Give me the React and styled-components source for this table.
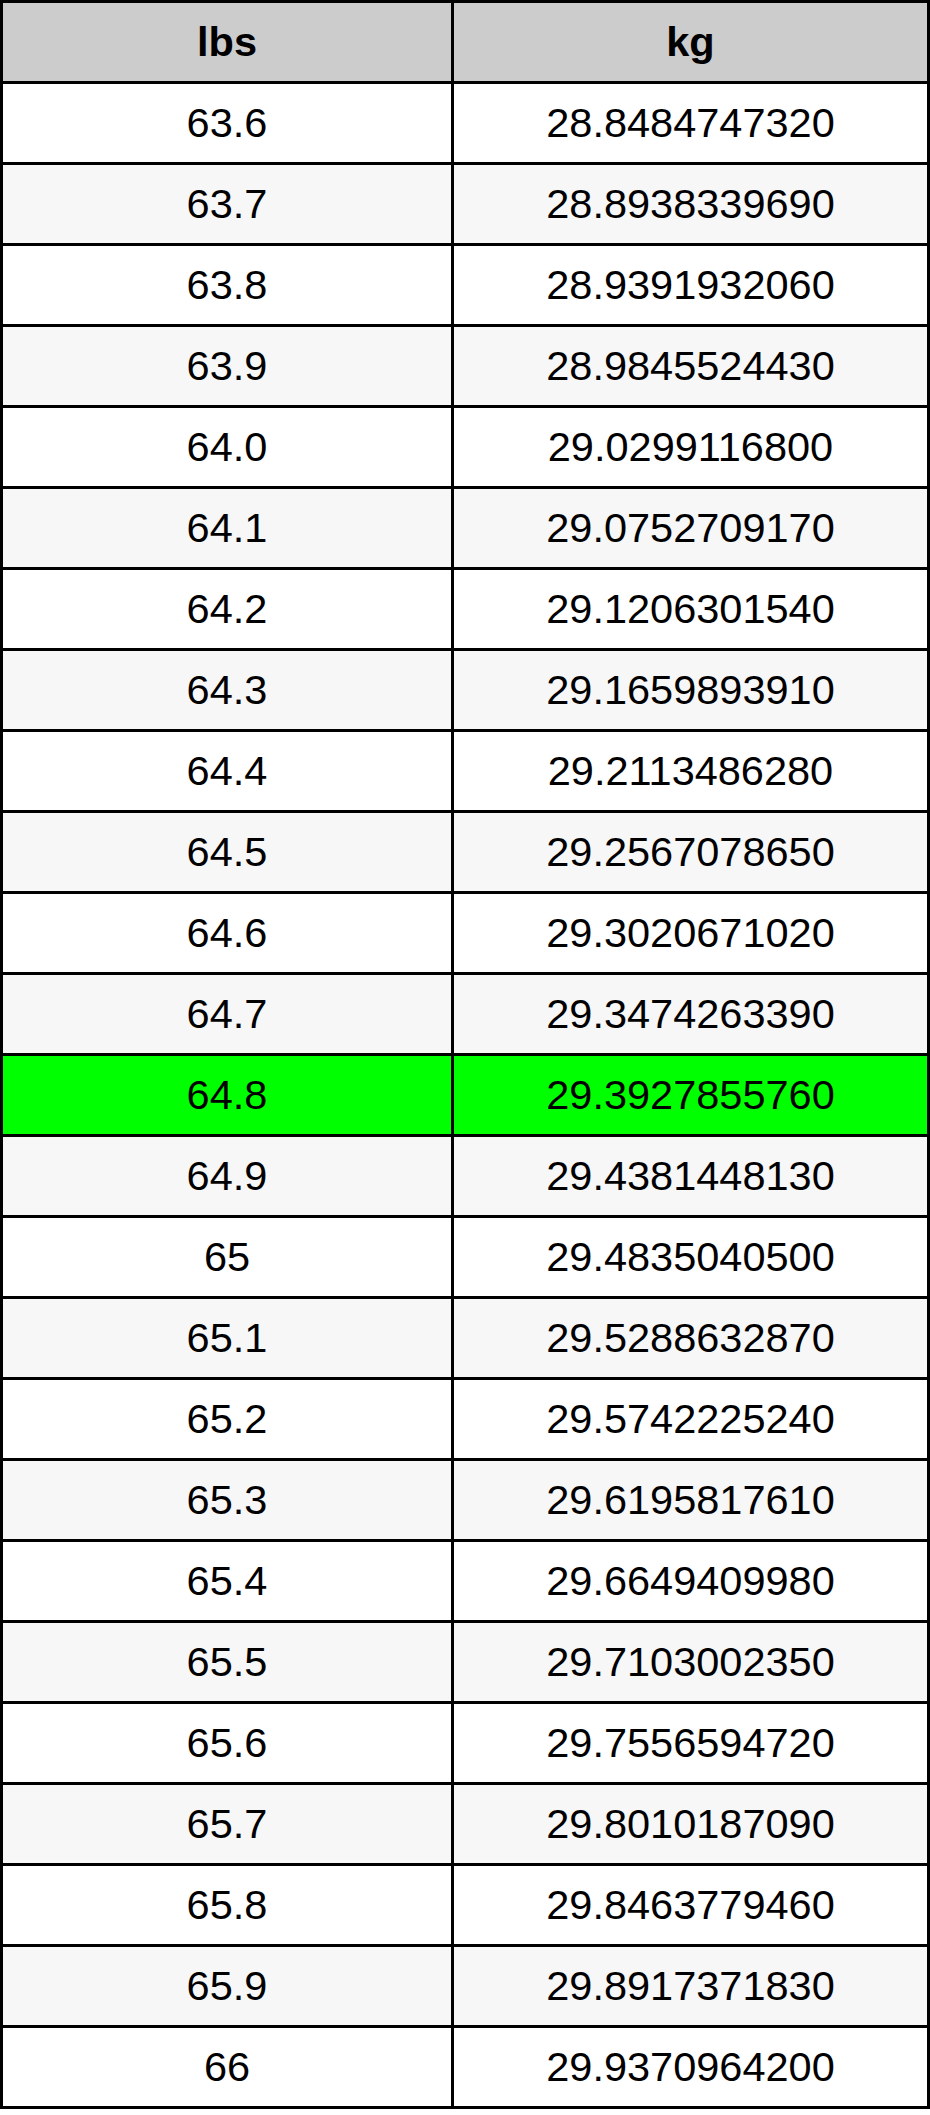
import React from 'react';
import styled, { createGlobalStyle } from 'styled-components';

const GlobalStyle = createGlobalStyle`
    body {
        margin: 0;
        background: #fff;
        font-family: "Liberation Sans", Arial, sans-serif;
    }
`;

const rows = [
    ['63.6', '28.8484747320'],
    ['63.7', '28.8938339690'],
    ['63.8', '28.9391932060'],
    ['63.9', '28.9845524430'],
    ['64.0', '29.0299116800'],
    ['64.1', '29.0752709170'],
    ['64.2', '29.1206301540'],
    ['64.3', '29.1659893910'],
    ['64.4', '29.2113486280'],
    ['64.5', '29.2567078650'],
    ['64.6', '29.3020671020'],
    ['64.7', '29.3474263390'],
    ['64.8', '29.3927855760'],
    ['64.9', '29.4381448130'],
    ['65', '29.4835040500'],
    ['65.1', '29.5288632870'],
    ['65.2', '29.5742225240'],
    ['65.3', '29.6195817610'],
    ['65.4', '29.6649409980'],
    ['65.5', '29.7103002350'],
    ['65.6', '29.7556594720'],
    ['65.7', '29.8010187090'],
    ['65.8', '29.8463779460'],
    ['65.9', '29.8917371830'],
    ['66', '29.9370964200'],
];

const highlight = '64.8';

export default function App() {
    return (
        <>
            <GlobalStyle />
            <Table>
                <colgroup>
                    <col style={{ width: 451 }} />
                    <col />
                </colgroup>
                <thead>
                    <tr>
                        <Head>lbs</Head>
                        <Head>kg</Head>
                    </tr>
                </thead>
                <tbody>
                    {rows.map(([lbs, kg], i) => (
                        <Row key={lbs} $striped={i % 2 === 1} $active={lbs === highlight}>
                            <Cell>{lbs}</Cell>
                            <Cell>{kg}</Cell>
                        </Row>
                    ))}
                </tbody>
            </Table>
        </>
    );
}

const Table = styled.table`
    width: 930px;
    border-collapse: collapse;
    table-layout: fixed;
`;

const Head = styled.th`
    height: 78px;
    padding: 0;
    border: 3px solid #000;
    background: #cccccc;
    font-size: 41.5px;
    font-weight: bold;
    text-align: center;
    vertical-align: middle;
`;

const Row = styled.tr`
    background: ${p => p.$active ? '#00ff00' : p.$striped ? '#f7f7f7' : '#ffffff'};
`;

const Cell = styled.td`
    height: 78px;
    padding: 0;
    border: 3px solid #000;
    font-size: 41.5px;
    text-align: center;
    vertical-align: middle;
`;
